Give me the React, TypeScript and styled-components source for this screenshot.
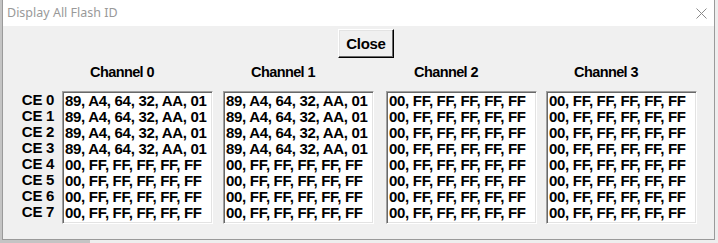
import React from 'react'
import styled, { createGlobalStyle } from 'styled-components'

const GlobalStyle = createGlobalStyle`
  html, body {
    margin: 0;
    padding: 0;
    background: #ffffff;
    overflow: hidden;
  }
`

const ui = {
  face: '#f0f0f0',
  shadow: '#a0a0a0',
  darkShadow: '#696969',
  light: '#e3e3e3',
  text: '#000000',
  font: '"Liberation Sans", Arial, sans-serif',
  titleFont: '"Noto Sans", "Open Sans", sans-serif'
}

const Screen = styled.div`
  width: 718px;
  height: 243px;
  background: linear-gradient(to right, #c4c4c4 0, #c4c4c4 90px, #eeeeee 90px);
  overflow: hidden;
`

const Window = styled.div`
  margin-left: 2px;
  width: 711px;
  height: 239px;
  border: 1px solid #9a9a9a;
  border-top: none;
  background: ${ui.face};
  display: flex;
  flex-direction: column;
`

const TitleBar = styled.div`
  height: 26px;
  background: #ffffff;
  display: flex;
  align-items: center;
  justify-content: space-between;
  padding: 0 7px 0 4px;
  flex-shrink: 0;
`

const Title = styled.span`
  font-family: ${ui.titleFont};
  font-size: 12.5px;
  color: #999999;
  margin-top: -1px;
`

const CloseX = styled.svg`
  width: 11px;
  height: 11px;
`

const Body = styled.div`
  flex: 1;
  display: flex;
  flex-direction: column;
  font-family: ${ui.font};
  font-weight: bold;
  color: ${ui.text};
`

const ButtonRow = styled.div`
  display: flex;
  padding: 3px 0 0 335px;
`

const Button = styled.button`
  width: 56px;
  height: 29px;
  padding: 0;
  background: ${ui.face};
  font-family: ${ui.font};
  font-weight: bold;
  font-size: 15px;
  letter-spacing: -0.3px;
  color: ${ui.text};
  border: 1px solid;
  border-color: #ffffff #000000 #000000 #ffffff;
  box-shadow: inset -1px -1px 0 ${ui.darkShadow}, inset 1px 1px 0 ${ui.light};
  outline: none;
`

const Grid = styled.div`
  display: grid;
  grid-template-columns: 59px 161px 163px 160px 151px;
  grid-template-rows: 33px auto;
`

const Header = styled.div`
  width: 120px;
  text-align: center;
  font-size: 14.5px;
  letter-spacing: -0.6px;
  line-height: 16px;
  padding-top: 6px;
`

const Labels = styled.div`
  display: flex;
  flex-direction: column;
  align-items: flex-end;
  padding: 1px 8px 0 0;
`

const Line = styled.div`
  font-size: 15px;
  letter-spacing: -0.3px;
  line-height: 16px;
  height: 16px;
  white-space: nowrap;
`

const Box = styled.div`
  width: 151px;
  height: 133px;
  box-sizing: border-box;
  background: #ffffff;
  border: 1px solid;
  border-color: ${ui.shadow} #ffffff #ffffff ${ui.shadow};
  box-shadow: inset 1px 1px 0 ${ui.darkShadow}, inset -1px -1px 0 ${ui.light};
  padding: 1px 0 0 2px;
`

const channels = [
  ['89, A4, 64, 32, AA, 01', '89, A4, 64, 32, AA, 01', '89, A4, 64, 32, AA, 01', '89, A4, 64, 32, AA, 01'],
  ['89, A4, 64, 32, AA, 01', '89, A4, 64, 32, AA, 01', '89, A4, 64, 32, AA, 01', '89, A4, 64, 32, AA, 01'],
  [],
  []
]

const empty = '00, FF, FF, FF, FF, FF'

export default function App() {
  return (
    <Screen>
      <GlobalStyle />
      <Window>
        <TitleBar>
          <Title>Display All Flash ID</Title>
          <CloseX viewBox="0 0 11 11">
            <path d="M0.5 0.5 L10.5 10.5 M10.5 0.5 L0.5 10.5" stroke="#8a8a8a" strokeWidth="1" fill="none" />
          </CloseX>
        </TitleBar>
        <Body>
          <ButtonRow>
            <Button>Close</Button>
          </ButtonRow>
          <Grid>
            <div />
            {channels.map((_, i) => (
              <Header key={'h' + i}>Channel {i}</Header>
            ))}
            <Labels>
              {Array.from({ length: 8 }, (_, i) => (
                <Line key={i}>CE {i}</Line>
              ))}
            </Labels>
            {channels.map((rows, c) => (
              <Box key={c}>
                {Array.from({ length: 8 }, (_, r) => (
                  <Line key={r}>{rows[r] ?? empty}</Line>
                ))}
              </Box>
            ))}
          </Grid>
        </Body>
      </Window>
    </Screen>
  )
}
